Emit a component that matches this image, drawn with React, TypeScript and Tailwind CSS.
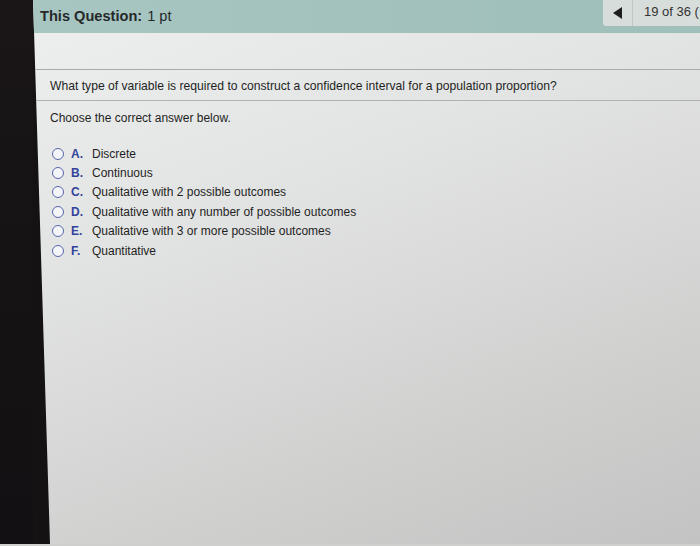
import React from 'react';

interface Choice {
  letter: string;
  text: string;
}

const choices: Choice[] = [
  { letter: 'A.', text: 'Discrete' },
  { letter: 'B.', text: 'Continuous' },
  { letter: 'C.', text: 'Qualitative with 2 possible outcomes' },
  { letter: 'D.', text: 'Qualitative with any number of possible outcomes' },
  { letter: 'E.', text: 'Qualitative with 3 or more possible outcomes' },
  { letter: 'F.', text: 'Quantitative' },
];

const ChoiceRow: React.FC<Choice> = ({ letter, text }) => (
  <label className="flex h-[19.4px] items-center">
    <span className="h-[12px] w-[12px] shrink-0 rounded-full border-[1.5px] border-[#5866aa] bg-[#f4f5f8]" />
    <span className="ml-[7px] w-[21px] font-bold text-[#34429a]">{letter}</span>
    <span className="text-[#1f1f1f]">{text}</span>
  </label>
);

const App: React.FC = () => {
  return (
    <div
      className="flex h-[546px] w-[700px] flex-col overflow-hidden bg-[#141213]"
      style={{ fontFamily: '"Liberation Sans", Arial, sans-serif' }}
    >
      <div className="flex h-[544px]">
        {/* Monitor bezel */}
        <div className="w-[33px] shrink-0 bg-[linear-gradient(180deg,#1a1617_0%,#121012_100%)]" />

        {/* Screen */}
        <div className="flex flex-1 flex-col bg-[linear-gradient(160deg,#eef0ef_0%,#e2e4e3_35%,#cfcfce_75%,#c3c3c3_100%)] [clip-path:polygon(0_0,100%_0,100%_100%,17px_100%)]">
          {/* Header bar */}
          <div className="flex h-[33px] items-start justify-between bg-[linear-gradient(90deg,#a7c6c2_0%,#a2c1bd_60%,#9fbfba_100%)]">
            <div className="flex h-[33px] items-center pl-[7px] text-[14.6px] text-[#25292a]">
              <span className="font-bold">This Question:</span>
              <span className="ml-[5px]">1 pt</span>
            </div>
            <div className="flex h-[26px] w-[97px] rounded-bl-[3px] bg-[#d7dddb] text-[13px] text-[#333]">
              <div className="flex w-[30px] items-center justify-center border-r border-[#bfc6c4]">
                <svg width="9" height="12" viewBox="0 0 9 12">
                  <path d="M9 0 L0 6 L9 12 Z" fill="#1e1e1e" />
                </svg>
              </div>
              <div className="flex items-center pl-[11px] pb-[2px]">19 of 36 (</div>
            </div>
          </div>

          <div className="h-[37px] border-b border-[#a9abaa]" />

          {/* Question */}
          <div className="flex h-[31px] items-center border-b border-[#b0b2b1] pl-[17px] pt-[3px] text-[12.15px] text-[#1f1f1f]">
            What type of variable is required to construct a confidence interval for a population proportion?
          </div>

          <div className="pl-[17px] pt-[10px] text-[12px] leading-[15px] text-[#1f1f1f]">
            Choose the correct answer below.
          </div>

          {/* Choices */}
          <div className="flex flex-col pl-[19px] pt-[18px] text-[12px]">
            {choices.map((c) => (
              <ChoiceRow key={c.letter} letter={c.letter} text={c.text} />
            ))}
          </div>
        </div>
      </div>
      <div className="h-[2px] bg-[#cfcfcd]" />
    </div>
  );
};

export default App;
